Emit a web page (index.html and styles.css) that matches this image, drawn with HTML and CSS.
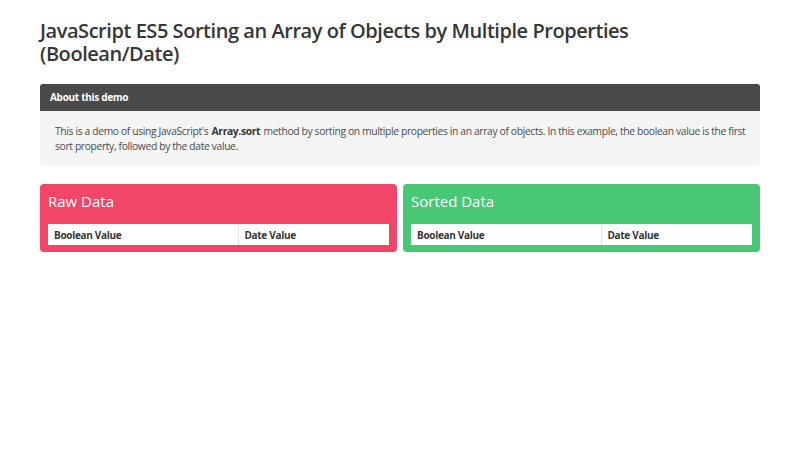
FILE: index.html
```html
<!DOCTYPE html>
<html lang="en">
<head>
    <meta charset="UTF-8">
    <meta name="viewport" content="width=device-width, initial-scale=1.0">
    <title>JavaScript ES5 Sorting an Array of Objects by Multiple Properties</title>
    <link rel="stylesheet" href="styles.css">
</head>
<body>
    <div class="container">
        <h1 class="title">JavaScript ES5 Sorting an Array of Objects by Multiple Properties (Boolean/Date)</h1>

        <!-- About -->
        <div class="message">
            <div class="message-header">About this demo</div>
            <div class="message-body">
                This is a demo of using JavaScript's <strong>Array.sort</strong> method by sorting on multiple properties in an array of objects. In this example, the boolean value is the first sort property, followed by the date value.
            </div>
        </div>

        <div class="columns">
            <!-- Raw data -->
            <div class="panel is-danger">
                <h2>Raw Data</h2>
                <table class="data-table">
                    <thead>
                        <tr><th class="col-bool">Boolean Value</th><th>Date Value</th></tr>
                    </thead>
                    <tbody id="raw-data"></tbody>
                </table>
            </div>

            <!-- Sorted data -->
            <div class="panel is-success">
                <h2>Sorted Data</h2>
                <table class="data-table">
                    <thead>
                        <tr><th class="col-bool">Boolean Value</th><th>Date Value</th></tr>
                    </thead>
                    <tbody id="sorted-data"></tbody>
                </table>
            </div>
        </div>
    </div>
</body>
</html>
```

FILE: styles.css
```css
:root {
    --text-color: #4a4a4a;
    --title-color: #363636;
    --dark-color: #4a4a4a;
    --light-color: #f5f5f5;
    --danger-color: #f14668;
    --success-color: #48c774;
}

body {
    font-family: 'Open Sans', 'Noto Sans', sans-serif;
    margin: 0;
    background: #fff;
    color: var(--text-color);
    font-size: 10.5px;
}

.container {
    width: 720px;
    margin: 0 auto;
    padding-top: 19px;
}

.title {
    font-size: 20px;
    line-height: 23px;
    font-weight: 600;
    color: var(--title-color);
    margin: 0 0 19px;
    letter-spacing: -0.45px;
}

.message {
    border-radius: 3px;
    background: var(--light-color);
    margin-bottom: 18px;
}

.message-header {
    background: var(--dark-color);
    color: #fff;
    font-weight: 700;
    font-size: 10px;
    letter-spacing: -0.3px;
    height: 27px;
    line-height: 27px;
    padding: 0 10px;
    border-radius: 3px 3px 0 0;
}

.message-body {
    padding: 13px 12px 12px 15px;
    font-size: 10.3px;
    line-height: 15px;
    letter-spacing: -0.35px;
}

.message-body strong {
    margin: 0 1px;
    color: var(--title-color);
}

.columns {
    display: grid;
    grid-template-columns: 1fr 1fr;
    gap: 6px;
}

.panel {
    border-radius: 4px;
    padding: 6px 8px 7px;
    color: #fff;
}

.panel.is-danger {
    background: var(--danger-color);
}

.panel.is-success {
    background: var(--success-color);
}

.panel h2 {
    margin: 0 0 12px;
    font-size: 15px;
    line-height: 22px;
    font-weight: 400;
}

.data-table {
    width: 100%;
    border-collapse: collapse;
    background: #fff;
    color: var(--title-color);
}

.data-table th {
    text-align: left;
    font-weight: 700;
    font-size: 10px;
    letter-spacing: -0.3px;
    height: 21px;
    padding: 0 5px;
    border-left: 1px solid #e6e6e6;
}

.data-table th:first-child {
    padding-left: 6px;
    border-left: none;
}

.col-bool {
    width: 56%;
}
```
